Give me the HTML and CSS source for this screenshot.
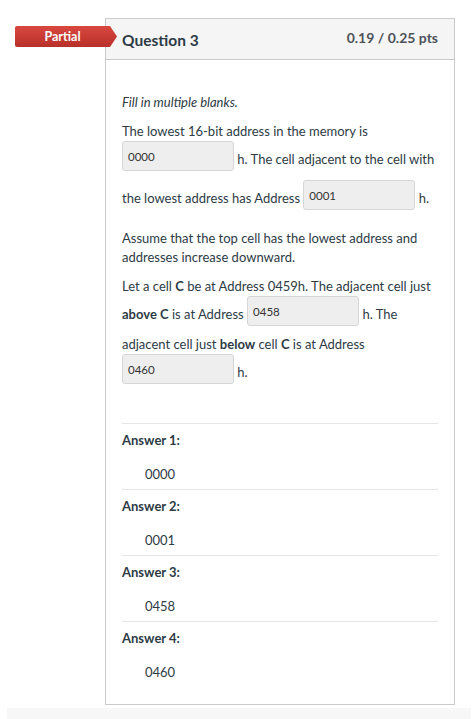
FILE: index.html
```html
<!DOCTYPE html>
<html lang="en">
<head>
<meta charset="utf-8">
<title>Question 3</title>
<link rel="stylesheet" href="styles.css">
</head>
<body>
<div class="page">
  <div class="question">
    <div class="badge">Partial</div>
    <div class="card">
      <div class="header">
        <h2 class="title">Question 3</h2>
        <div class="pts">0.19 / 0.25 pts</div>
      </div>
      <div class="body">
        <p class="hint"><em>Fill in multiple blanks.</em></p>
        <p>The lowest 16-bit address in the memory is <span class="blank">0000</span> h. The cell adjacent to the cell with the lowest address has Address <span class="blank">0001</span> h.</p>
        <p>Assume that the top cell has the lowest address and addresses increase downward.</p>
        <p>Let a cell <b>C</b> be at Address 0459h. The adjacent cell just <b>above C</b> is at Address <span class="blank">0458</span> h. The adjacent cell just <b>below</b> cell <b>C</b> is at Address <span class="blank">0460</span> h.</p>
        <div class="answers">
          <div class="answer"><div class="label">Answer 1:</div><div class="value">0000</div></div>
          <div class="answer"><div class="label">Answer 2:</div><div class="value">0001</div></div>
          <div class="answer"><div class="label">Answer 3:</div><div class="value">0458</div></div>
          <div class="answer"><div class="label">Answer 4:</div><div class="value">0460</div></div>
        </div>
      </div>
    </div>
  </div>
  <div class="strip"></div>
</div>
</body>
</html>
```

FILE: styles.css
```css
html, body {
  margin: 0;
  padding: 0;
  background: #ffffff;
}
body {
  font-family: Lato, "Open Sans", "Liberation Sans", sans-serif;
  color: #2d3b45;
  font-size: 13px;
  line-height: 19px;
}
.page {
  padding-top: 18px;
}
.question {
  position: relative;
  padding-left: 105px;
  padding-right: 19px;
}
.badge {
  position: absolute;
  left: 15px;
  top: 8px;
  width: 95px;
  padding-right: 7px;
  height: 21px;
  line-height: 21px;
  text-align: center;
  color: #ffffff;
  font-size: 12.5px;
  font-weight: 700;
  background: linear-gradient(#d9483f, #b8302a);
  border-radius: 2px 0 0 2px;
  clip-path: polygon(0 0, 95px 0, 102px 50%, 95px 100%, 0 100%);
}
.card {
  border: 1px solid #c8cacc;
  background: #ffffff;
}
.header {
  height: 40px;
  background: #f5f5f5;
  border-bottom: 1px solid #c8cacc;
  display: flex;
  align-items: center;
  justify-content: space-between;
  padding: 0 16px;
}
.title {
  margin: 0;
  font-size: 15.5px;
  font-weight: 700;
  color: #2d3b45;
  padding-top: 3px;
}
.pts {
  font-size: 14px;
  font-weight: 700;
  color: #4d5358;
  padding-bottom: 4px;
}
.body {
  padding: 33px 16px 17px;
}
.body p {
  margin: 0 0 10px;
}
.hint em {
  font-style: italic;
}
.blank {
  display: inline-block;
  box-sizing: border-box;
  width: 112px;
  height: 30px;
  padding: 5px 5px 0;
  line-height: 20px;
  font-size: 11.5px;
  color: #333333;
  background: #eeeeee;
  border: 1px solid #d6d6d6;
  border-radius: 3px;
  vertical-align: 3px;
  margin-bottom: 9px;
}
.answers {
  margin-top: 30px;
}
.answer {
  border-top: 1px solid #e6e6e6;
  padding: 7px 0 5px;
}
.label {
  font-weight: 700;
}
.value {
  margin-top: 15px;
  padding-left: 23px;
  color: #2d3b45;
}
.strip {
  margin: 3px 3px 0 7px;
  height: 14px;
  background: #f7f7f7;
}
```
